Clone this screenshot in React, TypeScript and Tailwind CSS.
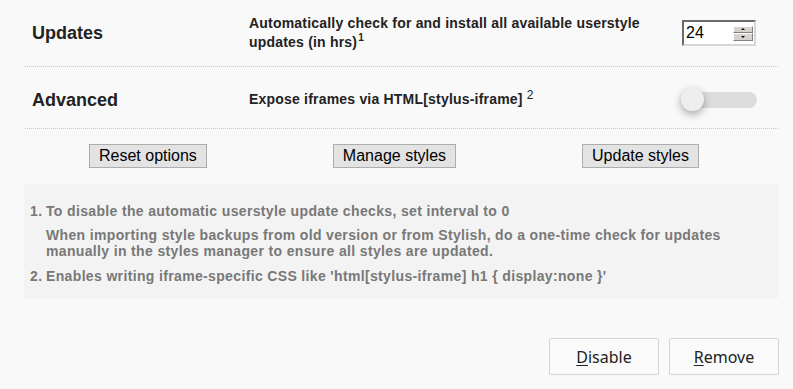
import React from "react";

export default function App() {
  return (
    <div
      className="w-[793px] h-[389px] bg-[#f9f9f9] overflow-hidden flex flex-col text-[#222]"
      style={{ fontFamily: '"Liberation Sans", Arial, sans-serif' }}
    >
      <div className="ml-[25px] w-[753px] flex flex-col">
        {/* Updates row */}
        <div className="h-[67px] border-b border-dotted border-[#c8c8c8] flex items-center">
          <div className="w-[224px] pl-[7px] text-[18px] font-bold leading-[22px]">Updates</div>
          <div className="w-[425px] text-[14px] tracking-[0.2px] font-bold leading-[19px]">
            Automatically check for and install all available userstyle updates (in hrs)
            <span className="inline-block text-[10px] font-bold leading-none relative top-[-6px] ml-[1px] tracking-normal">1</span>
          </div>
          <div className="ml-[8px] w-[74px] h-[26px] border-t-2 border-l-2 border-b-2 border-r-2 border-t-[#6b6b6b] border-l-[#6b6b6b] border-b-[#d8d6d0] border-r-[#d8d6d0] bg-white flex items-center">
            <span className="pl-[2px] text-[16px] text-black leading-none flex-1">24</span>
            <div className="w-[20px] h-[15px] mr-[1px] flex flex-col">
              <div className="h-[7px] bg-[#d6d3ce] border border-t-white border-l-white border-b-[#808080] border-r-[#808080] flex items-center justify-center">
                <div className="w-0 h-0 border-l-[2px] border-r-[2px] border-b-[2px] border-l-transparent border-r-transparent border-b-black" />
              </div>
              <div className="h-[8px] bg-[#d6d3ce] border border-t-white border-l-white border-b-[#808080] border-r-[#808080] flex items-center justify-center">
                <div className="w-0 h-0 border-l-[2px] border-r-[2px] border-t-[2px] border-l-transparent border-r-transparent border-t-black" />
              </div>
            </div>
          </div>
        </div>
        {/* Advanced row */}
        <div className="h-[62px] pt-[4px] border-b border-dotted border-[#c8c8c8] flex items-center">
          <div className="w-[224px] pl-[7px] text-[18px] font-bold leading-[22px]">Advanced</div>
          <div className="w-[425px] text-[14px] tracking-[0.2px] font-bold leading-[19px]">
            Expose iframes via HTML[stylus-iframe]{" "}
            <span className="inline-block text-[12px] font-normal leading-none relative top-[-5px] tracking-normal">2</span>
          </div>
          <div className="ml-[7px] relative w-[76px] h-[16px]">
            <div className="absolute left-[3px] right-0 top-0 h-[16px] rounded-full bg-[#dddddd]" />
            <div className="absolute left-0 top-[-4px] w-[23px] h-[23px] rounded-full bg-[#eeeeee] shadow-[0_3px_8px_rgba(0,0,0,0.35)]" />
          </div>
        </div>
      </div>

      {/* action buttons */}
      <div className="mt-[15px] ml-[26px] w-[736px] flex justify-around">
        {["Reset options", "Manage styles", "Update styles"].map((t) => (
          <button
            key={t}
            className="h-[24px] px-[9px] border border-[#adadad] bg-[#e3e3e3] text-[16px] text-black leading-none"
            style={{ fontFamily: '"Liberation Sans", Arial, sans-serif' }}
          >
            {t}
          </button>
        ))}
      </div>

      {/* notes */}
      <div className="mt-[16px] ml-[24px] w-[754px] h-[114px] bg-[#f3f3f3] pt-[19px] pl-[6px] text-[14px] tracking-[0.35px] font-bold text-[#787878] leading-[16px]">
        <div className="flex">
          <span className="w-[16px]">1.</span>
          <span>To disable the automatic userstyle update checks, set interval to 0</span>
        </div>
        <div className="mt-[8px] pl-[16px] w-[710px]">
          When importing style backups from old version or from Stylish, do a one-time check for updates manually in the styles manager to ensure all styles are updated.
        </div>
        <div className="flex mt-[9px]">
          <span className="w-[16px]">2.</span>
          <span>Enables writing iframe-specific CSS like 'html[stylus-iframe] h1 {"{"} display:none {"}"}'</span>
        </div>
      </div>

      {/* bottom buttons */}
      <div className="mt-[40px] w-[779px] flex justify-end gap-[10px]">
        {[
          ["D", "isable"],
          ["R", "emove"],
        ].map(([a, b]) => (
          <button
            key={a}
            className="w-[110px] h-[37px] rounded-[2px] border border-[#d4d4d4] bg-[#fafafa] text-[16px] text-[#222] flex items-center justify-center"
            style={{ fontFamily: '"Noto Sans", "Open Sans", sans-serif' }}
          >
            <span className="underline underline-offset-2">{a}</span>
            {b}
          </button>
        ))}
      </div>
    </div>
  );
}
